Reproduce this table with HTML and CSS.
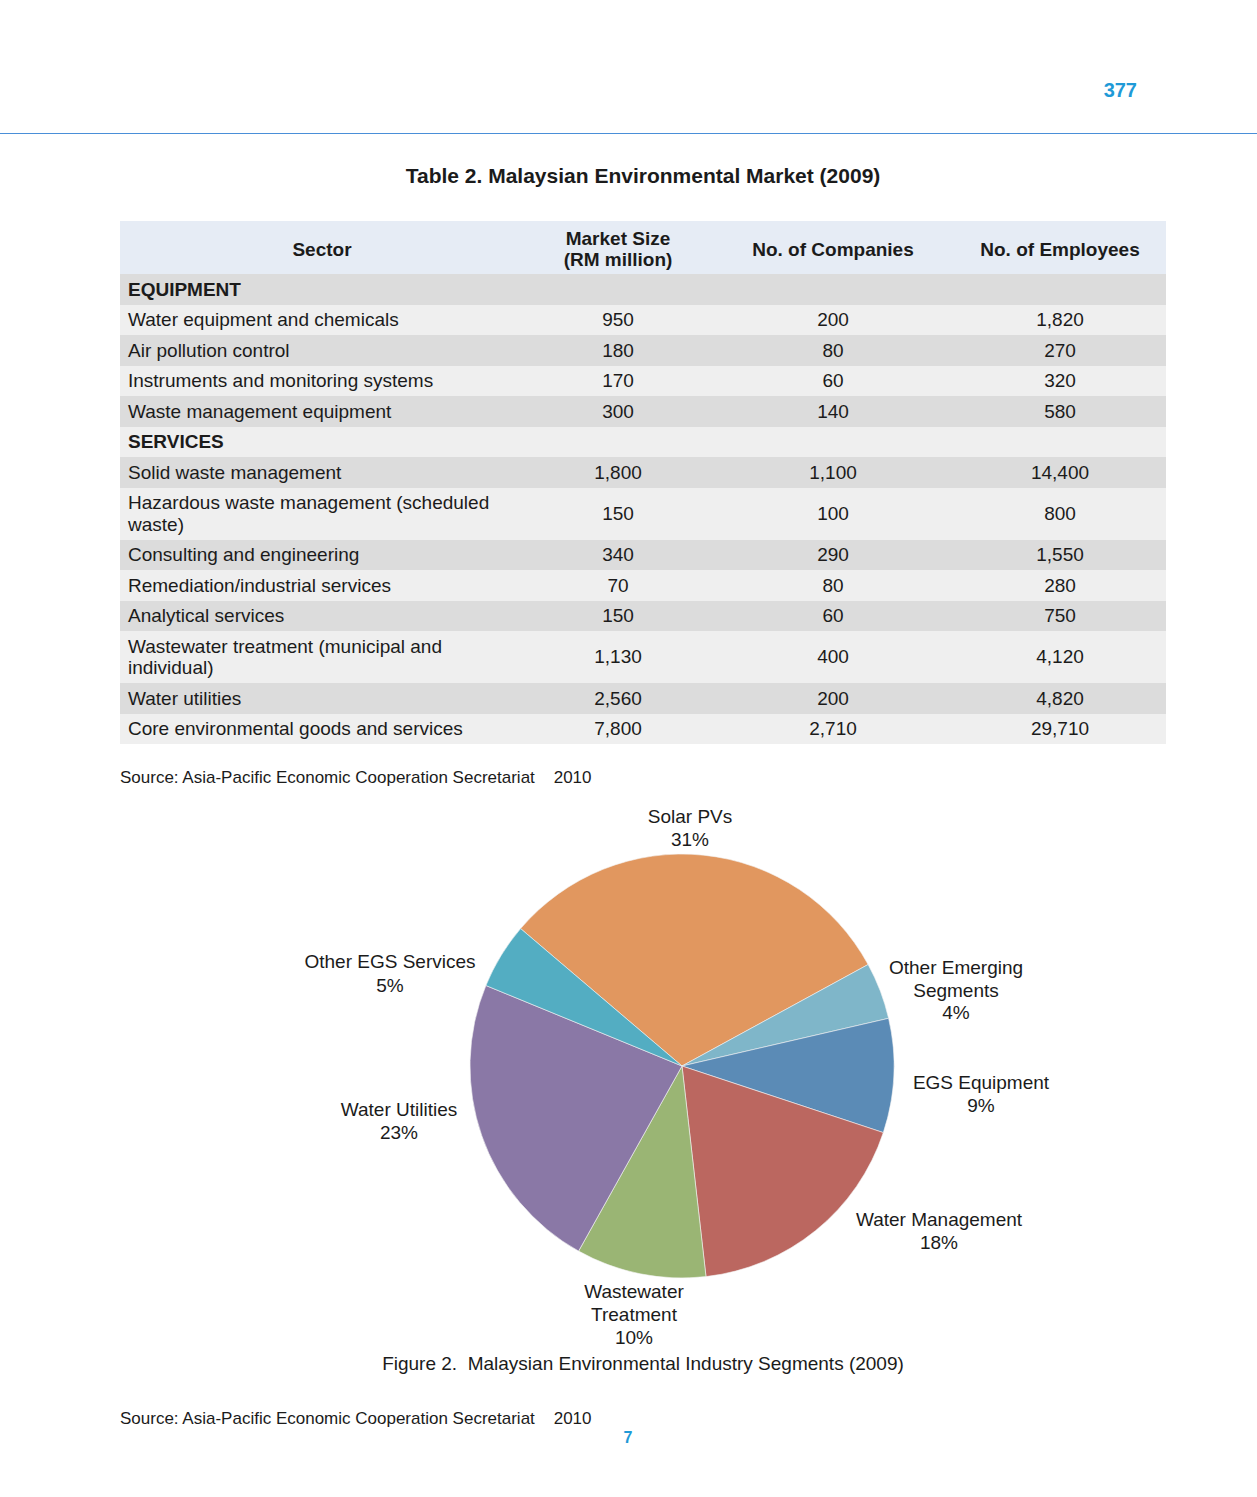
FILE: index.html
```html
<!DOCTYPE html>
<html lang="en">
<head>
<meta charset="utf-8">
<title>Malaysian Environmental Market</title>
<link rel="stylesheet" href="styles.css">
</head>
<body>
<header class="page-head">
  <span class="page-no">377</span>
</header>
<main class="content">
  <h1 class="table-title">Table 2. Malaysian Environmental Market (2009)</h1>
  <table class="market">
    <colgroup>
      <col class="c-sector"><col class="c-size"><col class="c-comp"><col class="c-emp">
    </colgroup>
    <thead>
      <tr><th>Sector</th><th>Market Size<br>(RM million)</th><th>No. of Companies</th><th>No. of Employees</th></tr>
    </thead>
    <tbody>
      <tr class="dark group"><td>EQUIPMENT</td><td></td><td></td><td></td></tr>
      <tr class="light"><td>Water equipment and chemicals</td><td>950</td><td>200</td><td>1,820</td></tr>
      <tr class="dark"><td>Air pollution control</td><td>180</td><td>80</td><td>270</td></tr>
      <tr class="light"><td>Instruments and monitoring systems</td><td>170</td><td>60</td><td>320</td></tr>
      <tr class="dark"><td>Waste management equipment</td><td>300</td><td>140</td><td>580</td></tr>
      <tr class="light group"><td>SERVICES</td><td></td><td></td><td></td></tr>
      <tr class="dark"><td>Solid waste management</td><td>1,800</td><td>1,100</td><td>14,400</td></tr>
      <tr class="light"><td>Hazardous waste management (scheduled waste)</td><td>150</td><td>100</td><td>800</td></tr>
      <tr class="dark"><td>Consulting and engineering</td><td>340</td><td>290</td><td>1,550</td></tr>
      <tr class="light"><td>Remediation/industrial services</td><td>70</td><td>80</td><td>280</td></tr>
      <tr class="dark"><td>Analytical services</td><td>150</td><td>60</td><td>750</td></tr>
      <tr class="light"><td>Wastewater treatment (municipal and individual)</td><td>1,130</td><td>400</td><td>4,120</td></tr>
      <tr class="dark"><td>Water utilities</td><td>2,560</td><td>200</td><td>4,820</td></tr>
      <tr class="light"><td>Core environmental goods and services</td><td>7,800</td><td>2,710</td><td>29,710</td></tr>
    </tbody>
  </table>
  <p class="source first">Source: Asia-Pacific Economic Cooperation Secretariat&nbsp;&nbsp;&nbsp;&nbsp;2010</p>

  <figure class="figure">
    <svg class="pie" width="1046" height="555" viewBox="120 795 1046 555" xmlns="http://www.w3.org/2000/svg">
      <g class="slices">
        <path fill="#e1975f" d="M682 1066 L520.6 928.6 A212 212 0 0 1 868.1 964.5 Z"/>
        <path fill="#7fb6c9" d="M682 1066 L868.1 964.5 A212 212 0 0 1 888.6 1018.3 Z"/>
        <path fill="#5b8bb6" d="M682 1066 L888.6 1018.3 A212 212 0 0 1 883.3 1132.6 Z"/>
        <path fill="#bb6760" d="M682 1066 L883.3 1132.6 A212 212 0 0 1 706.0 1276.6 Z"/>
        <path fill="#9ab574" d="M682 1066 L706.0 1276.6 A212 212 0 0 1 578.6 1251.1 Z"/>
        <path fill="#8a78a6" d="M682 1066 L578.6 1251.1 A212 212 0 0 1 485.9 985.5 Z"/>
        <path fill="#53adc2" d="M682 1066 L485.9 985.5 A212 212 0 0 1 520.6 928.6 Z"/>
      </g>
      <g class="labels">
        <text x="690" y="823">Solar PVs</text>
        <text x="690" y="846">31%</text>
        <text x="390" y="968">Other EGS Services</text>
        <text x="390" y="992">5%</text>
        <text x="956" y="974">Other Emerging</text>
        <text x="956" y="997">Segments</text>
        <text x="956" y="1019">4%</text>
        <text x="981" y="1089">EGS Equipment</text>
        <text x="981" y="1112">9%</text>
        <text x="399" y="1116">Water Utilities</text>
        <text x="399" y="1139">23%</text>
        <text x="939" y="1226">Water Management</text>
        <text x="939" y="1249">18%</text>
        <text x="634" y="1298">Wastewater</text>
        <text x="634" y="1321">Treatment</text>
        <text x="634" y="1344">10%</text>
      </g>
    </svg>
    <figcaption class="caption">Figure 2.&nbsp; Malaysian Environmental Industry Segments (2009)</figcaption>
  </figure>
  <p class="source second">Source: Asia-Pacific Economic Cooperation Secretariat&nbsp;&nbsp;&nbsp;&nbsp;2010</p>
  <div class="folio">7</div>
</main>
</body>
</html>
```

FILE: styles.css
```css
* { box-sizing: border-box; }
html, body { margin: 0; padding: 0; background: #fff; }
body {
  font-family: "Liberation Sans", Arial, sans-serif;
  color: #1b1b1b;
  width: 1257px;
}
.page-head {
  height: 134px;
  border-bottom: 1px solid #4a8fd8;
  display: flex;
  justify-content: flex-end;
  padding: 79px 120px 0 0;
}
.page-no {
  font-weight: bold;
  font-size: 20px;
  line-height: 22px;
  color: #1f9ad7;
}
.content {
  width: 1046px;
  margin-left: 120px;
}
.table-title {
  margin: 29px 0 0;
  font-size: 21px;
  line-height: 25px;
  font-weight: bold;
  text-align: center;
  height: 58px;
}
.market {
  width: 1046px;
  border-collapse: collapse;
  table-layout: fixed;
  font-size: 19px;
}
.c-sector { width: 404px; }
.c-size { width: 188px; }
.c-comp { width: 242px; }
.c-emp { width: 212px; }
.market th {
  background: #e6ecf5;
  font-weight: bold;
  line-height: 21px;
  height: 53px;
  padding: 3px 4px 0;
  text-align: center;
  vertical-align: middle;
}
.market td {
  line-height: 21.5px;
  padding: 4.5px 4px;
  text-align: center;
  vertical-align: middle;
}
.market td:first-child {
  text-align: left;
  padding-left: 8px;
  padding-right: 24px;
}
.market tr.dark td { background: #dcdcdc; }
.market tr.light td { background: #efefef; }
.market tr.group td:first-child { font-weight: bold; }
.source {
  margin: 0;
  font-size: 17px;
  line-height: 20px;
}
.source.first { margin-top: 24px; }
.figure {
  margin: 0;
  padding: 0;
}
.pie { display: block; margin-top: 7px; }
.pie .slices path { stroke: #f3f3f3; stroke-width: 0.6; }
.pie .labels text {
  font-family: "Liberation Sans", Arial, sans-serif;
  font-size: 19px;
  fill: #1b1b1b;
  text-anchor: middle;
}
.caption {
  text-align: center;
  font-size: 19px;
  line-height: 22px;
  margin-top: 3px;
}
.source.second { margin-top: 34px; }
.folio {
  text-align: center;
  margin-left: -30px;
  font-weight: bold;
  font-size: 16px;
  line-height: 18px;
  color: #1f9ad7;
}
```
